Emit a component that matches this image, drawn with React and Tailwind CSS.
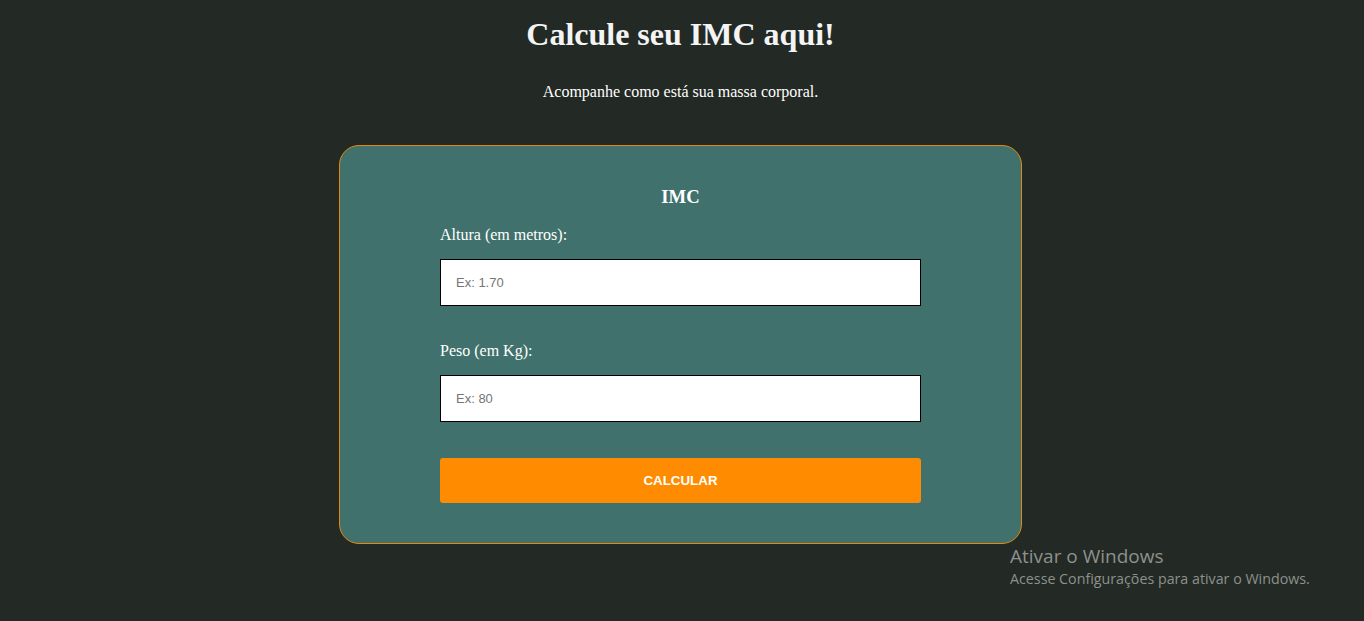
export default function App() {
  return (
    <div className="relative min-h-[621px] bg-[#232924] pt-[16px] pr-[3px] font-['Liberation_Serif',serif] text-white">
      <h1 className="text-center text-[32px] leading-[37px] font-bold text-[#f4f4f4]">Calcule seu IMC aqui!</h1>
      <p className="mt-[30px] text-center text-[16px] leading-[18px]">Acompanhe como está sua massa corporal.</p>

      <form
        className="mx-auto mt-[44px] flex w-[683px] flex-col rounded-[20px] border border-[#e8870f] bg-[#40716c] px-[100px] pt-[40px] pb-[40px]"
        onSubmit={(e) => e.preventDefault()}
      >
        <h3 className="text-center text-[18.72px] leading-[21px] font-bold">IMC</h3>

        <label htmlFor="altura" className="mt-[19px] text-[16px] leading-[18px]">Altura (em metros):</label>
        <input
          id="altura"
          type="text"
          placeholder="Ex: 1.70"
          className="mt-[15px] h-[47px] w-full border border-black bg-white pl-[15px] font-['Liberation_Sans',Arial,sans-serif] text-[13px] text-black outline-none placeholder:text-[#757575]"
        />

        <label htmlFor="peso" className="mt-[36px] text-[16px] leading-[18px]">Peso (em Kg):</label>
        <input
          id="peso"
          type="text"
          placeholder="Ex: 80"
          className="mt-[15px] h-[47px] w-full border border-black bg-white pl-[15px] font-['Liberation_Sans',Arial,sans-serif] text-[13px] text-black outline-none placeholder:text-[#757575]"
        />

        <button
          type="submit"
          className="mt-[36px] h-[45px] w-full rounded-[3px] bg-[#ff8c00] font-['Liberation_Sans',Arial,sans-serif] text-[13.33px] font-bold text-white"
        >
          CALCULAR
        </button>
      </form>

      {/* marca d'água do Windows */}
      <div className="pointer-events-none absolute top-[543px] left-[1010px] font-['Open_Sans','Noto_Sans',sans-serif] text-[#8d918d]">
        <p className="text-[19px] leading-[26px]">Ativar o Windows</p>
        <p className="text-[14.25px] leading-[19px]">Acesse Configurações para ativar o Windows.</p>
      </div>
    </div>
  )
}
